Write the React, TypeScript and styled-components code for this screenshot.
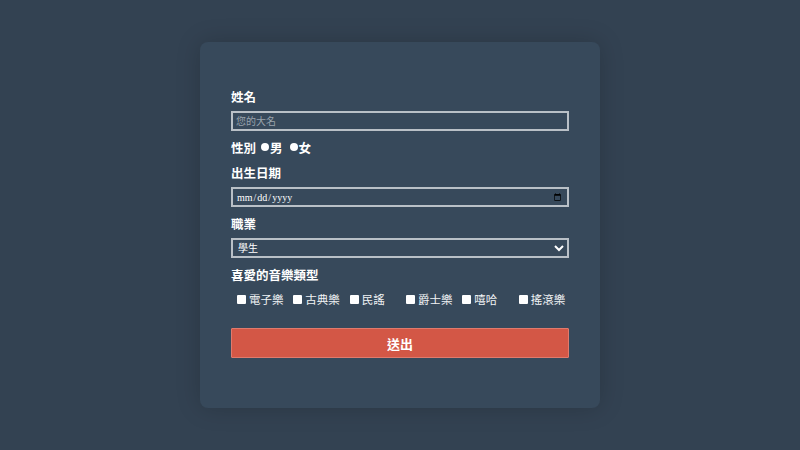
import React from "react";
import styled, { createGlobalStyle } from "styled-components";

const Global = createGlobalStyle`
  html, body { margin: 0; padding: 0; background: #334252; }
  body { font-family: "Liberation Sans", "Noto Sans CJK TC", sans-serif; color: #fff; }
  * { box-sizing: border-box; }
`;

const Page = styled.div`
  width: 800px;
  height: 450px;
  display: flex;
  align-items: center;
  justify-content: center;
  background: #334252;
`;

const Card = styled.form`
  width: 400px;
  height: 366px;
  background: #37495b;
  border-radius: 8px;
  box-shadow: 0 0 24px rgba(0, 0, 0, 0.18);
  padding: 47px 31px 0 31px;
  display: flex;
  flex-direction: column;
`;

const Label = styled.label<{ $mb?: number }>`
  display: block;
  font-size: 12.5px;
  font-weight: 700;
  line-height: 18px;
  height: 18px;
  margin-bottom: ${(p) => p.$mb ?? 4}px;
  color: #fff;
`;

const Field = styled.div<{ $mb: number }>`
  margin-bottom: ${(p) => p.$mb}px;
`;

const TextInput = styled.input`
  display: block;
  width: 100%;
  height: 20px;
  background: transparent;
  border: 2px solid #b9c0c7;
  border-radius: 0;
  padding: 0 3px;
  color: #fff;
  font-size: 10px;
  font-family: "Liberation Serif", "Noto Sans CJK TC", serif;
  outline: none;
  &::placeholder {
    color: #99a3ad;
    font-family: "Liberation Sans", "Noto Sans CJK TC", sans-serif;
  }
  &::-webkit-calendar-picker-indicator {
    width: 9px;
    height: 9px;
    padding: 0;
    margin-right: 2px;
  }
`;

const Select = styled.select`
  display: block;
  width: 100%;
  height: 20px;
  background: transparent;
  border: 2px solid #b9c0c7;
  border-radius: 0;
  padding: 0 1px;
  color: #fff;
  font-size: 10px;
  font-family: "Liberation Sans", "Noto Sans CJK TC", sans-serif;
  outline: none;
  option { color: #000; }
`;

const GenderRow = styled.div`
  display: flex;
  align-items: center;
  height: 18px;
  margin-bottom: 9px;
  font-size: 12.5px;
  font-weight: 700;
`;

const GenderTitle = styled.span`
  margin-right: 5px;
`;

const RadioItem = styled.span`
  display: inline-flex;
  align-items: center;
  margin-right: 7px;
`;

const RadioDot = styled.span`
  width: 8px;
  height: 8px;
  border-radius: 50%;
  background: #fff;
  margin-right: 1px;
`;

const CheckGrid = styled.div`
  display: grid;
  grid-template-columns: repeat(6, 1fr);
  height: 16px;
  margin-top: 6px;
  margin-bottom: 21px;
`;

const CheckItem = styled.span`
  display: flex;
  align-items: center;
  padding-left: 6px;
  font-size: 11.5px;
  color: #f1f3f5;
`;

const Box = styled.span`
  width: 9px;
  height: 9px;
  background: #fff;
  border-radius: 1px;
  margin-right: 3px;
  flex: none;
`;

const Submit = styled.button`
  width: 100%;
  height: 30px;
  background: #d35746;
  border: 1px solid #e07a6c;
  border-radius: 1px;
  color: #fff;
  font-size: 13px;
  font-weight: 700;
  font-family: "Liberation Sans", "Noto Sans CJK TC", sans-serif;
  padding: 0;
`;

const genres = ["電子樂", "古典樂", "民謠", "爵士樂", "嘻哈", "搖滾樂"];

export default function App() {
  return (
    <Page>
      <Global />
      <Card onSubmit={(e) => e.preventDefault()}>
        <Label>姓名</Label>
        <Field $mb={7}>
          <TextInput placeholder="您的大名" />
        </Field>
        <GenderRow>
          <GenderTitle>性別</GenderTitle>
          <RadioItem>
            <RadioDot />男
          </RadioItem>
          <RadioItem>
            <RadioDot />女
          </RadioItem>
        </GenderRow>
        <Label>出生日期</Label>
        <Field $mb={9}>
          <TextInput type="date" />
        </Field>
        <Label>職業</Label>
        <Field $mb={9}>
          <Select defaultValue="學生">
            <option>學生</option>
            <option>上班族</option>
            <option>其他</option>
          </Select>
        </Field>
        <Label $mb={0}>喜愛的音樂類型</Label>
        <CheckGrid>
          {genres.map((g) => (
            <CheckItem key={g}>
              <Box />
              {g}
            </CheckItem>
          ))}
        </CheckGrid>
        <Submit type="submit">送出</Submit>
      </Card>
    </Page>
  );
}
